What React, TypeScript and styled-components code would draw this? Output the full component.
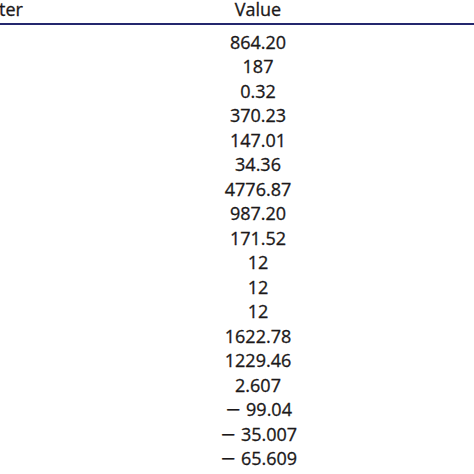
import styled, { createGlobalStyle } from 'styled-components'

const GlobalStyle = createGlobalStyle`
  html, body {
    margin: 0;
    padding: 0;
    background: #fff;
    overflow: hidden;
  }
  body {
    font-family: "Open Sans", "Noto Sans", sans-serif;
    color: #1b1819;
  }
`

const Frame = styled.div`
  width: 474px;
  height: 474px;
  overflow: hidden;
`

const Table = styled.div`
  display: grid;
  grid-template-columns: 108px 432px;
  margin-left: -66px;
  font-size: 18px;
  line-height: 24.5px;
  -webkit-text-stroke: 0.3px #1b1819;
`

const HeadCell = styled.div<{ $center?: boolean }>`
  text-align: ${({ $center }) => ($center ? 'center' : 'left')};
  line-height: 18px;
  padding-bottom: 5px;
  border-bottom: 2px solid #24276e;
`

const Cell = styled.div<{ $first?: boolean }>`
  text-align: center;
  padding-top: ${({ $first }) => ($first ? '4.5px' : '0')};
`

const Spacer = styled.div<{ $first?: boolean }>`
  padding-top: ${({ $first }) => ($first ? '4.5px' : '0')};
`

const Minus = styled.span`
  display: inline-block;
  width: 13px;
  transform: scaleX(1.4);
  transform-origin: left center;
  margin-right: 9px;
`

const values = [
  '864.20',
  '187',
  '0.32',
  '370.23',
  '147.01',
  '34.36',
  '4776.87',
  '987.20',
  '171.52',
  '12',
  '12',
  '12',
  '1622.78',
  '1229.46',
  '2.607',
  '-99.04',
  '-35.007',
  '-65.609',
]

const Value = ({ v }: { v: string }) =>
  v.startsWith('-') ? (
    <>
      <Minus>{'\u2212'}</Minus>
      {v.slice(1)}
    </>
  ) : (
    <>{v}</>
  )

export default function App() {
  return (
    <Frame>
      <GlobalStyle />
      <Table>
        <HeadCell>Parameter</HeadCell>
        <HeadCell $center>Value</HeadCell>
        {values.map((v, i) => [
          <Spacer key={'p' + i} $first={i === 0} />,
          <Cell key={'v' + i} $first={i === 0}>
            <Value v={v} />
          </Cell>,
        ])}
      </Table>
    </Frame>
  )
}
